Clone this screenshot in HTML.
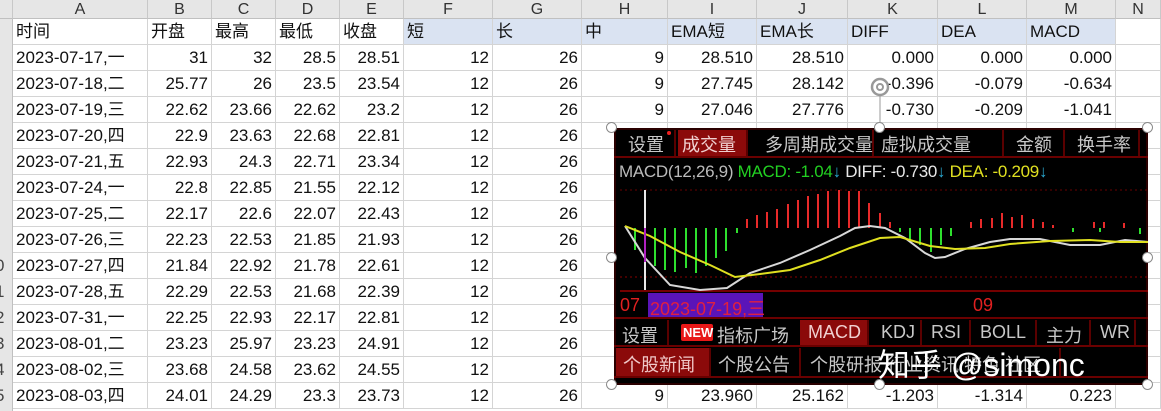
<!DOCTYPE html>
<html><head><meta charset="utf-8"><style>
*{margin:0;padding:0;box-sizing:border-box}
body{width:1161px;height:411px;overflow:hidden;background:#fff;font-family:"Liberation Sans","Noto Sans CJK SC",sans-serif;position:relative}
.c{position:absolute;height:26px;line-height:26px;font-size:17px;color:#111;border-right:1px solid #d4d4d4;border-bottom:1px solid #d4d4d4;padding:0 3px;white-space:nowrap;overflow:hidden}
.r{text-align:right}
.h{position:absolute;top:0;height:19px;line-height:19px;font-size:16px;color:#333;background:#e6e6e6;border-right:1px solid #c8c8c8;border-bottom:1px solid #c0c0c0;text-align:center}
.blue{background:#dae3f2}
.ch{position:absolute;left:614px;top:128px;width:534px;height:257px;background:#000;border:2px solid #2a0000}
.t{position:absolute;font-size:18px;color:#c8c8c8;white-space:nowrap}
.hd{position:absolute;width:11px;height:11px;border-radius:50%;background:#fff;border:1.5px solid #8a8a8a}
</style></head><body>
<div id="g"></div>
<script>
var cols=[[0,13],[13,148],[148,212],[212,276],[276,340],[340,404],[404,493],[493,582],[582,668],[668,757],[757,848],[848,938],[938,1027],[1027,1116],[1116,1161]];
var L=["","A","B","C","D","E","F","G","H","I","J","K","L","M","N"];
var hdr=["","时间","开盘","最高","最低","收盘","短","长","中","EMA短","EMA长","DIFF","DEA","MACD",""];
var d=[["2023-07-17,一","31","32","28.5","28.51","0.000","0.000","0.000","28.510","28.510"],
["2023-07-18,二","25.77","26","23.5","23.54","-0.396","-0.079","-0.634","27.745","28.142"],
["2023-07-19,三","22.62","23.66","22.62","23.2","-0.730","-0.209","-1.041","27.046","27.776"],
["2023-07-20,四","22.9","23.63","22.68","22.81"],["2023-07-21,五","22.93","24.3","22.71","23.34"],
["2023-07-24,一","22.8","22.85","21.55","22.12"],["2023-07-25,二","22.17","22.6","22.07","22.43"],
["2023-07-26,三","22.23","22.53","21.85","21.93"],["2023-07-27,四","21.84","22.92","21.78","22.61"],
["2023-07-28,五","22.29","22.53","21.68","22.39"],["2023-07-31,一","22.25","22.93","22.17","22.81"],
["2023-08-01,二","23.23","25.97","23.23","24.91"],["2023-08-02,三","23.68","24.58","23.62","24.55"],
["2023-08-03,四","24.01","24.29","23.3","23.73","-1.203","-1.314","0.223","23.960","25.162"]];
var h="";
for(var i=0;i<cols.length;i++){var c=cols[i];h+='<div class="h" style="left:'+c[0]+'px;width:'+(c[1]-c[0])+'px">'+L[i]+'</div>';}
function cell(i,y,txt,cls){var c=cols[i];h+='<div class="c '+(cls||"")+'" style="left:'+c[0]+'px;top:'+y+'px;width:'+(c[1]-c[0])+'px">'+txt+'</div>';}
for(var i=1;i<cols.length;i++)cell(i,19,hdr[i],(i>=6&&i<=13)?"blue":"");
for(var r=0;r<14;r++){var y=45+r*26,x=d[r];
cell(1,y,x[0]);for(var k=1;k<5;k++)cell(k+1,y,x[k],"r");
cell(6,y,"12","r");cell(7,y,"26","r");cell(8,y,"9","r");
cell(9,y,x[8]||"","r");cell(10,y,x[9]||"","r");cell(11,y,x[5]||"","r");cell(12,y,x[6]||"","r");cell(13,y,x[7]||"","r");cell(14,y,"");}
document.getElementById("g").innerHTML=h;
</script>
<div style="position:absolute;left:0;top:19px;width:13px;height:392px;background:#e6e6e6;border-right:1px solid #c0c0c0"></div>
<div style="position:absolute;left:0;top:253px;font-size:17px;color:#444;line-height:26px">
<div style="margin-left:-5px">0</div><div style="margin-left:-5px">1</div><div style="margin-left:-5px">2</div><div style="margin-left:-5px">3</div><div style="margin-left:-5px">4</div><div style="margin-left:-5px">5</div></div>

<div class="ch"></div>
<svg style="position:absolute;left:0;top:0" width="1161" height="411">
<rect x="678" y="130" width="68" height="26" fill="#8b0a0a"/>
<g stroke="#5a0000" stroke-width="2"><line x1="675" y1="130" x2="675" y2="156"/><line x1="747" y1="130" x2="747" y2="156"/><line x1="873" y1="130" x2="873" y2="156"/><line x1="1003" y1="130" x2="1003" y2="156"/><line x1="1064" y1="130" x2="1064" y2="156"/><line x1="1139" y1="130" x2="1139" y2="156"/></g>
<line x1="614" y1="157" x2="1148" y2="157" stroke="#6a0000" stroke-width="2"/>
<circle cx="669" cy="133" r="2" fill="#f02020"/>
<line x1="620" y1="190" x2="1148" y2="190" stroke="#6a0000" stroke-dasharray="2 3"/>
<line x1="620" y1="277" x2="1148" y2="277" stroke="#8a0000" stroke-dasharray="2 3"/>
<line x1="620" y1="291" x2="1148" y2="291" stroke="#9a0000" stroke-width="1.5"/>
<line x1="614" y1="318" x2="1148" y2="318" stroke="#6a0000" stroke-width="2"/>
<line x1="614" y1="346" x2="1148" y2="346" stroke="#6a0000" stroke-width="2"/>
<line x1="614" y1="377" x2="1148" y2="377" stroke="#6a0000" stroke-width="2"/>
<g stroke="#2ee02e" stroke-width="2">
<line x1="635" y1="228" x2="635" y2="250"/><line x1="655" y1="228" x2="655" y2="266"/><line x1="665" y1="228" x2="665" y2="270"/><line x1="675" y1="228" x2="675" y2="272"/><line x1="686" y1="228" x2="686" y2="268"/><line x1="696" y1="228" x2="696" y2="273"/><line x1="706" y1="228" x2="706" y2="266"/><line x1="716" y1="228" x2="716" y2="258"/><line x1="726" y1="228" x2="726" y2="251"/><line x1="737" y1="228" x2="737" y2="233"/>
<line x1="900" y1="228" x2="900" y2="232"/><line x1="910" y1="228" x2="910" y2="240"/><line x1="920" y1="228" x2="920" y2="245"/><line x1="931" y1="228" x2="931" y2="252"/><line x1="941" y1="228" x2="941" y2="245"/><line x1="951" y1="228" x2="951" y2="236"/><line x1="1073" y1="228" x2="1073" y2="232"/><line x1="1100" y1="228" x2="1100" y2="232"/><line x1="1140" y1="228" x2="1140" y2="234"/></g>
<g stroke="#e82a2a" stroke-width="2">
<line x1="747" y1="228" x2="747" y2="219"/><line x1="757" y1="228" x2="757" y2="215"/><line x1="767" y1="228" x2="767" y2="212"/><line x1="777" y1="228" x2="777" y2="209"/><line x1="788" y1="228" x2="788" y2="204"/><line x1="798" y1="228" x2="798" y2="200"/><line x1="808" y1="228" x2="808" y2="196"/><line x1="818" y1="228" x2="818" y2="194"/><line x1="828" y1="228" x2="828" y2="191"/><line x1="839" y1="228" x2="839" y2="190"/><line x1="849" y1="228" x2="849" y2="191"/><line x1="859" y1="228" x2="859" y2="191"/><line x1="869" y1="228" x2="869" y2="203"/><line x1="880" y1="228" x2="880" y2="213"/><line x1="890" y1="228" x2="890" y2="222"/>
<line x1="971" y1="228" x2="971" y2="222"/><line x1="981" y1="228" x2="981" y2="219"/><line x1="992" y1="228" x2="992" y2="218"/><line x1="1002" y1="228" x2="1002" y2="213"/><line x1="1012" y1="228" x2="1012" y2="217"/><line x1="1022" y1="228" x2="1022" y2="215"/><line x1="1033" y1="228" x2="1033" y2="219"/><line x1="1043" y1="228" x2="1043" y2="222"/><line x1="1053" y1="228" x2="1053" y2="225"/><line x1="1094" y1="228" x2="1094" y2="222"/><line x1="1104" y1="228" x2="1104" y2="222"/><line x1="1124" y1="228" x2="1124" y2="223"/></g>
<polyline fill="none" stroke="#d8d8d8" stroke-width="2" points="625,226 645,258 670,285 700,290 727,288 750,273 780,263 810,250 840,236 855,228 870,226 885,228 905,238 925,253 935,258 945,257 965,249 990,242 1010,239 1040,239 1070,245 1100,245 1125,240 1148,242"/>
<polyline fill="none" stroke="#e0e020" stroke-width="2" points="625,226 650,236 680,252 710,265 735,277 760,274 790,270 820,260 850,248 880,238 900,237 930,246 955,249 985,248 1010,244 1050,241 1090,240 1120,242 1148,242"/>
<line x1="645" y1="190" x2="645" y2="290" stroke="#e8e8e8" stroke-width="2"/>
<line x1="645" y1="228" x2="645" y2="262" stroke="#b020c0" stroke-width="2"/>
<rect x="648" y="293" width="115" height="24" fill="#5a14b8"/>
<rect x="800" y="320" width="68" height="25" fill="#8b0a0a"/>
<rect x="681" y="324" width="32" height="17" rx="2" fill="#e81818"/>
<rect x="616" y="348" width="94" height="28" fill="#8b0a0a"/>
<g stroke="#5a0000" stroke-width="2"><line x1="668" y1="320" x2="668" y2="345"/><line x1="868" y1="320" x2="868" y2="345"/><line x1="921" y1="320" x2="921" y2="345"/><line x1="970" y1="320" x2="970" y2="345"/><line x1="1036" y1="320" x2="1036" y2="345"/><line x1="1090" y1="320" x2="1090" y2="345"/><line x1="1135" y1="320" x2="1135" y2="345"/><line x1="710" y1="348" x2="710" y2="376"/><line x1="800" y1="348" x2="800" y2="376"/><line x1="1060" y1="348" x2="1060" y2="376"/></g>
<circle cx="880" cy="87" r="8" fill="none" stroke="#999" stroke-width="2.5"/><circle cx="880" cy="87" r="3" fill="none" stroke="#999" stroke-width="2"/>
<line x1="880" y1="95" x2="880" y2="122" stroke="#999"/>
</svg>
<div class="t" style="left:628px;top:131px">设置</div>
<div class="t" style="left:682px;top:131px;color:#f0d0d0">成交量</div>
<div class="t" style="left:765px;top:131px">多周期成交量</div>
<div class="t" style="left:881px;top:131px">虚拟成交量</div>
<div class="t" style="left:1016px;top:131px">金额</div>
<div class="t" style="left:1077px;top:131px">换手率</div>
<div class="t" style="left:619px;top:162px;font-size:17px;letter-spacing:-0.3px"><span style="color:#bbb">MACD(12,26,9) </span><span style="color:#22d022">MACD: -1.04</span><span style="color:#2aa8d0">↓</span><span style="color:#e8e8e8"> DIFF: -0.730</span><span style="color:#2aa8d0">↓</span><span style="color:#e0e020"> DEA: -0.209</span><span style="color:#2aa8d0">↓</span></div>
<div class="t" style="left:620px;top:295px;color:#e02020">07</div>
<div class="t" style="left:650px;top:295px;color:#e02040">2023-07-19,三</div>
<div class="t" style="left:973px;top:295px;color:#e02020">09</div>
<div class="t" style="left:622px;top:322px">设置</div>
<div class="t" style="left:683px;top:325px;font-size:13px;color:#fff;font-weight:bold">NEW</div>
<div class="t" style="left:717px;top:322px">指标广场</div>
<div class="t" style="left:808px;top:322px;color:#f0d0d0">MACD</div>
<div class="t" style="left:881px;top:322px">KDJ</div>
<div class="t" style="left:931px;top:322px">RSI</div>
<div class="t" style="left:980px;top:322px">BOLL</div>
<div class="t" style="left:1046px;top:322px">主力</div>
<div class="t" style="left:1100px;top:322px">WR</div>
<div class="t" style="left:623px;top:351px;color:#f0c8c8">个股新闻</div>
<div class="t" style="left:718px;top:351px">个股公告</div>
<div class="t" style="left:810px;top:351px">个股研报 行业资讯 特色 社区</div>
<div class="t" style="left:878px;top:340px;font-size:32px;color:#fff">知乎 @simonc</div>
<div class="hd" style="left:606px;top:122px"></div><div class="hd" style="left:874px;top:122px"></div><div class="hd" style="left:1142px;top:122px"></div>
<div class="hd" style="left:606px;top:252px"></div><div class="hd" style="left:1142px;top:252px"></div>
<div class="hd" style="left:606px;top:379px"></div><div class="hd" style="left:874px;top:379px"></div><div class="hd" style="left:1142px;top:379px"></div>
</body></html>
